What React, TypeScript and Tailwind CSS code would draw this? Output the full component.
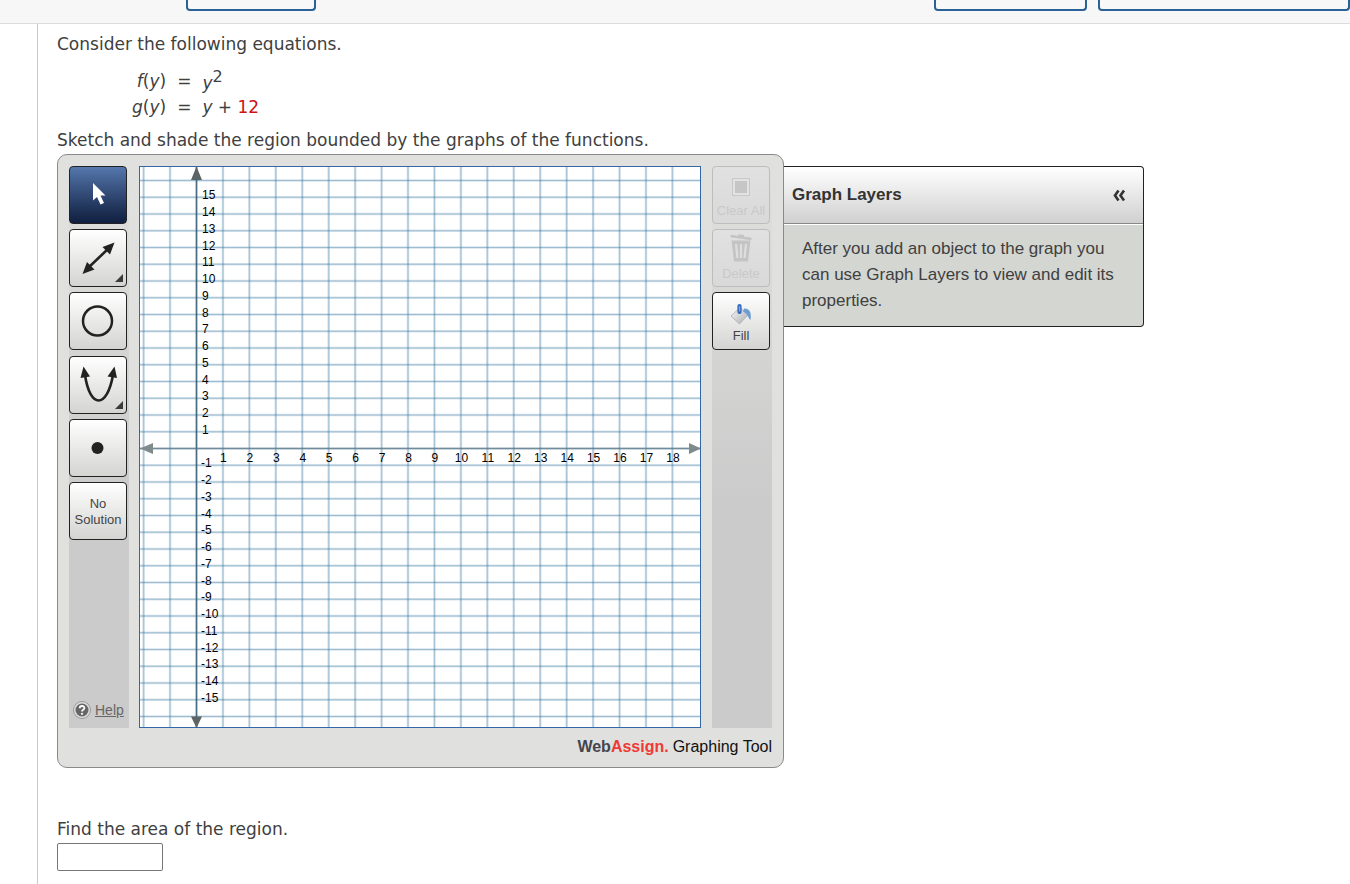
import type { ReactNode } from "react";

const SIZE = 562;
const X0 = 57.5;
const Y0 = 282.5;
const UX = 26.44;
const UY = 16.75;

const range = (a: number, b: number) => Array.from({ length: b - a + 1 }, (_, i) => a + i);

function ToolButton({ label, selected, children }: { label?: string; selected?: boolean; children: ReactNode }) {
  return (
    <button
      type="button"
      aria-label={label}
      aria-pressed={selected}
      className={
        "flex size-[58px] shrink-0 flex-col items-center justify-center overflow-hidden rounded border border-[#222] text-[13px] leading-4 text-[#444] " +
        (selected ? "bg-linear-to-b from-[#5577ad] to-[#101f3f]" : "bg-linear-to-b from-white to-[#d4d4d2]")
      }
    >
      {children}
    </button>
  );
}

function DisabledButton({ children }: { children: ReactNode }) {
  return (
    <button
      type="button"
      disabled
      className="flex size-[58px] shrink-0 flex-col items-center justify-end gap-1 overflow-hidden whitespace-nowrap rounded border border-[#bdbdbd] bg-linear-to-b from-[#e1e1e1] to-[#d9d9d9] pb-1 text-[13px] leading-4 text-[#c9c9c9]"
    >
      {children}
    </button>
  );
}

function Graph() {
  return (
    <svg viewBox="0 0 562 562" className="size-[562px] shrink-0 bg-white" role="img" aria-label="Coordinate grid">
      <g stroke="#3c7ba5">
        {range(-2, 18).map((i) => {
          const x = X0 + i * UX;
          return (
            <g key={i}>
              <line x1={x} x2={x} y1="0" y2={SIZE} strokeWidth="2.4" opacity="0.25" />
              <line x1={x} x2={x} y1="0" y2={SIZE} strokeWidth="1" opacity="0.25" />
            </g>
          );
        })}
        {range(-16, 16).map((i) => {
          const y = Y0 - i * UY;
          return (
            <g key={i}>
              <line y1={y} y2={y} x1="0" x2={SIZE} strokeWidth="2.6" opacity="0.2" />
              <line y1={y} y2={y} x1="0" x2={SIZE} strokeWidth="1" opacity="0.36" />
            </g>
          );
        })}
      </g>
      <path d="M57.5 0V562" stroke="#2e5870" strokeWidth="1.5" opacity="0.8" />
      <path d="M0 282.5H562" stroke="#5f7785" strokeWidth="1.5" opacity="0.7" />
      <g fill="#5d6466">
        <path d="M57.5 0.5 63 14H52ZM57.5 562 52 550.5H63Z" />
        <path d="M1 282.5 14 277V288ZM562 282.5 550 277V288Z" fill="#7f8a8d" />
      </g>
      <g fontFamily="Liberation Sans, Arial, sans-serif" fontSize="12" fill="#000">
        {range(1, 18).map((i) => (
          <text key={i} x={X0 + i * UX + 0.5} y="296" textAnchor="middle">
            {i}
          </text>
        ))}
        {range(-15, 15)
          .filter((i) => i !== 0)
          .map((i) => (
            <text key={i} x={i > 0 ? 63 : 62} y={Math.round(Y0 - i * UY + 2)}>
              {i}
            </text>
          ))}
      </g>
      <rect x="0.5" y="0.5" width="561" height="561" fill="none" stroke="#3467a5" />
    </svg>
  );
}

function Corner() {
  return <path d="M53 44V52H45Z" fill="#3b3b3b" />;
}

export default function App() {
  return (
    <div className="flex min-h-screen flex-col bg-white font-['DejaVu_Sans',Verdana,sans-serif] text-[17px] text-[#404040]">
      <header className="flex h-6 items-start border-b border-[#dcdcdc] bg-[#f7f7f7] pl-[186px]">
        <button type="button" aria-label="Previous" className="h-[11px] w-[130px] rounded-b border-2 border-t-0 border-[#2a6298] bg-[#f8f8f8]" />
        <div className="ml-auto flex gap-[11px]">
          <button type="button" aria-label="Notes" className="h-[11px] w-[153px] rounded-b border-2 border-t-0 border-[#2a6298] bg-[#f8f8f8]" />
          <button type="button" aria-label="Practice" className="h-[11px] w-[252px] rounded-b border-2 border-t-0 border-[#2a6298] bg-[#f8f8f8]" />
        </div>
      </header>

      <main className="ml-[37px] flex-1 border-l border-[#c8c8c8] pt-2 pl-[19px]">
        <p className="leading-6">Consider the following equations.</p>

        <div className="mt-3 ml-[75px] grid w-fit grid-cols-[auto_auto_auto] items-center gap-x-[11px] leading-[26px]">
          <span className="text-right">
            <i>f</i>(<i>y</i>)
          </span>
          <span>=</span>
          <span className="flex">
            <i className="pt-1 leading-[22px]">y</i>
            <span className="text-base leading-[18px]">2</span>
          </span>
          <span className="text-right">
            <i>g</i>(<i>y</i>)
          </span>
          <span>=</span>
          <span>
            <i>y</i> + <span className="text-[#cc1414]">12</span>
          </span>
        </div>

        <p className="mt-2 leading-6">Sketch and shade the region bounded by the graphs of the functions.</p>

        <div className="mt-0.5 flex items-start font-['Liberation_Sans',Arial,sans-serif]">
          <section className="rounded-[10px] border border-[#8a8a8a] bg-[#e0e0de] p-[11px] pb-0">
            <div className="flex">
              <div className="flex w-[60px] flex-col justify-between bg-linear-to-b from-[#e0e0de] to-[#cbcbcb] to-60%">
                <div className="flex h-[374px] flex-col justify-between">
                  <ToolButton label="Select" selected>
                    <svg viewBox="0 0 56 56" className="size-14">
                      <path d="M23 16V33.500L27 30 30.500 37.500 34 36 30.500 28.500H35.500Z" fill="#fff" />
                    </svg>
                  </ToolButton>
                  <ToolButton label="Line">
                    <svg viewBox="0 0 56 56" className="size-14">
                      <path d="M18 38 39 18" stroke="#222" strokeWidth="2.600" />
                      <path d="M12.500 44 17 32 24.500 39.500ZM44.500 12.500 40 24.500 32.500 17Z" fill="#222" />
                      <Corner />
                    </svg>
                  </ToolButton>
                  <ToolButton label="Circle">
                    <svg viewBox="0 0 56 56" className="size-14">
                      <circle cx="27.500" cy="28" r="14.500" fill="none" stroke="#222" strokeWidth="2.500" />
                    </svg>
                  </ToolButton>
                  <ToolButton label="Parabola">
                    <svg viewBox="0 0 56 56" className="size-14">
                      <path d="M15 18C20 52 37 52 43 18" fill="none" stroke="#222" strokeWidth="2.600" />
                      <path d="M13.500 9.500 20 19.500 10.500 21ZM44.500 9.500 47 21 37.500 19.500Z" fill="#222" />
                      <Corner />
                    </svg>
                  </ToolButton>
                  <ToolButton label="Point">
                    <svg viewBox="0 0 56 56" className="size-14">
                      <circle cx="27.500" cy="28" r="6" fill="#222" />
                    </svg>
                  </ToolButton>
                  <ToolButton>
                    <span className="pt-0.5">No</span>
                    <span>Solution</span>
                  </ToolButton>
                </div>
                <a href="#help" className="flex items-center gap-1 pb-[9px] pl-1 text-sm leading-[18px] text-[#666]">
                  <svg viewBox="0 0 18 18" className="size-[18px]">
                    <circle cx="9" cy="9" r="8.500" fill="#ddd" stroke="#999" />
                    <circle cx="9" cy="9" r="6.500" fill="#666" />
                    <path d="M6.700 7.300C6.700 4.300 11.400 4.300 11.400 7C11.400 8.800 9 8.800 9 10.500" fill="none" stroke="#fff" strokeWidth="1.800" />
                    <circle cx="9" cy="12.800" r="1.100" fill="#fff" />
                  </svg>
                  <span className="underline">Help</span>
                </a>
              </div>

              <div className="mr-[11px] ml-2.5">
                <Graph />
              </div>

              <div className="flex w-[60px] flex-col gap-[5px] bg-linear-to-b from-[#e0e0de] to-[#cbcbcb] to-60%">
                <DisabledButton>
                  <svg viewBox="0 0 20 20" className="mb-0.5 size-5">
                    <rect x="1.500" y="1.500" width="17" height="17" fill="#e2e2e2" stroke="#c8c8c8" />
                    <rect x="4" y="4" width="12" height="12" fill="#c6c6c6" />
                  </svg>
                  Clear All
                </DisabledButton>
                <DisabledButton>
                  <svg viewBox="0 0 24 28" className="h-7 w-6">
                    <path d="M1.500 2 22.500 5M9 1.500 15 2.300" stroke="#c4c4c4" strokeWidth="2.400" />
                    <path d="M2.500 6.500H21.500L19 27.500H5Z" fill="#c4c4c4" />
                    <path d="M7 10 8.500 24M12 10V24M17 10 15.500 24" stroke="#dedede" strokeWidth="2.200" />
                  </svg>
                  Delete
                </DisabledButton>
                <ToolButton>
                  <svg viewBox="0 0 24 24" className="mt-1 size-6 shrink-0">
                    <defs>
                      <linearGradient id="bucket" x1="0" y1="0" x2="1" y2="1">
                        <stop offset="0" stopColor="#fafafa" />
                        <stop offset="1" stopColor="#a9acb0" />
                      </linearGradient>
                    </defs>
                    <path d="M2 14 11 5.500 19 13 10.500 22Z" fill="url(#bucket)" stroke="#a9acb0" strokeWidth="0.800" />
                    <path d="M15 6.500C20 6 23 10 21.500 18C19 16 19 12 14 9.500Z" fill="#6f9fd2" />
                    <path d="M10.500 4V10" stroke="#3266bd" strokeWidth="4.200" strokeLinecap="round" />
                    <path d="M10.500 4.500V9" stroke="#7fa5e0" strokeWidth="1.400" strokeLinecap="round" />
                  </svg>
                  <span className="mt-0.5">Fill</span>
                </ToolButton>
              </div>
            </div>
            <footer className="flex h-[39px] items-center justify-end gap-1 pb-0.5 text-base text-[#111]">
              <b className="text-[#45454d]">
                Web<span className="text-[#ee3a35]">Assign.</span>
              </b>
              <span>Graphing Tool</span>
            </footer>
          </section>

          <aside className="mt-3 w-[360px] rounded-r border border-l-0 border-[#222] bg-[#d4d6d1]">
            <div className="flex h-[57px] items-center justify-between rounded-tr border-b border-[#888] bg-linear-to-b from-white to-[#d0d0d0] pr-4 pl-2 font-bold text-[#333]">
              <h2>Graph Layers</h2>
              <button type="button" aria-label="Collapse" className="h-6 w-4">
                <svg viewBox="0 0 16 24" className="h-6 w-4">
                  <path d="M7.500 7.500 4 12.500 7.500 17.500M13 7.500 9.500 12.500 13 17.500" fill="none" stroke="#333" strokeWidth="2.600" />
                </svg>
              </button>
            </div>
            <p className="border-t border-white px-[18px] pt-[11px] pb-3 leading-[26px]">
              After you add an object to the graph you can use Graph Layers to view and edit its properties.
            </p>
          </aside>
        </div>

        <label htmlFor="area" className="mt-12 block pt-px leading-6">
          Find the area of the region.
        </label>
        <input id="area" type="text" className="mt-0.5 block h-7 w-[106px] rounded-xs border border-[#767676] bg-white px-1" />
      </main>
    </div>
  );
}
